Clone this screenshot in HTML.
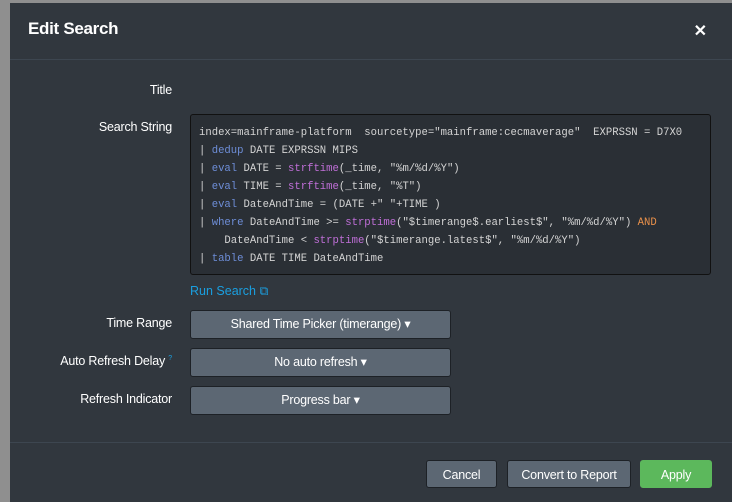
<!DOCTYPE html><html><head><style>
body{margin:0;width:732px;height:502px;background:#8f8f8f;position:relative;overflow:hidden;font-family:"Liberation Sans",sans-serif}
.m{position:absolute;left:10px;top:3px;width:722px;height:499px;background:#31373e}
.hd{position:absolute;left:0;top:0;right:0;height:56px;border-bottom:1px solid #3d4650}
.hd h1{margin:0;position:absolute;left:18px;top:16px;font-size:17px;color:#fff;font-weight:bold;letter-spacing:-0.3px}
.x{position:absolute;right:25px;top:18px;color:#fff;font-size:16px;font-weight:bold}
.lb{position:absolute;right:560px;color:#fff;font-size:12.5px;text-align:right;white-space:nowrap;letter-spacing:-0.2px}
.code{position:absolute;left:180px;top:111px;width:521px;height:161px;background:#2a2f35;border:1px solid #111;border-radius:3px;font-family:"Liberation Mono",monospace;font-size:10.6px;color:#d4d4d4;line-height:18px;padding-top:9px;box-sizing:border-box;padding-left:8px;white-space:pre}
.k{color:#6e8ed8}.f{color:#c06fd8}.a{color:#e8904a}
.dd{position:absolute;left:180px;width:259px;height:27px;background:#5c6773;border:1px solid #1d2126;border-radius:3px;color:#fff;font-size:12.5px;text-align:center;line-height:27px;letter-spacing:-0.2px}
.ft{position:absolute;left:0;right:0;top:439px;border-top:1px solid #3d4650}
.b{position:absolute;top:457px;height:28px;border-radius:3px;color:#fff;font-size:12.5px;text-align:center;line-height:28px;background:#5c6773;border:1px solid #1d2126;box-sizing:border-box;letter-spacing:-0.2px}
</style></head><body>
<div class="m">
<div class="hd"><h1>Edit Search</h1><div class="x">✕</div></div>
<div class="lb" style="top:80px">Title</div>
<div class="lb" style="top:117px">Search String</div>
<div class="code">index=mainframe-platform  sourcetype="mainframe:cecmaverage"  EXPRSSN = D7X0
| <span class="k">dedup</span> DATE EXPRSSN MIPS
| <span class="k">eval</span> DATE = <span class="f">strftime</span>(_time, "%m/%d/%Y")
| <span class="k">eval</span> TIME = <span class="f">strftime</span>(_time, "%T")
| <span class="k">eval</span> DateAndTime = (DATE +" "+TIME )
| <span class="k">where</span> DateAndTime &gt;= <span class="f">strptime</span>("$timerange$.earliest$", "%m/%d/%Y") <span class="a">AND</span>
    DateAndTime &lt; <span class="f">strptime</span>("$timerange.latest$", "%m/%d/%Y")
| <span class="k">table</span> DATE TIME DateAndTime</div>
<div style="position:absolute;left:180px;top:281px;color:#1a9fe0;font-size:12.5px">Run Search ⧉</div>
<div class="lb" style="top:313px">Time Range</div>
<div class="dd" style="top:307px">Shared Time Picker (timerange) ▾</div>
<div class="lb" style="top:351px">Auto Refresh Delay <sup style="color:#1a9fe0;font-size:7px">?</sup></div>
<div class="dd" style="top:345px">No auto refresh ▾</div>
<div class="lb" style="top:389px">Refresh Indicator</div>
<div class="dd" style="top:383px">Progress bar ▾</div>
<div class="ft"></div>
<div class="b" style="left:416px;width:71px">Cancel</div>
<div class="b" style="left:497px;width:124px">Convert to Report</div>
<div class="b" style="left:630px;width:72px;background:#5cb85c;border-color:#5cb85c">Apply</div>
</div>
</body></html>
